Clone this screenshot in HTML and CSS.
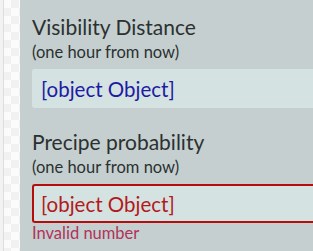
FILE: index.html
```html
<!DOCTYPE html>
<html lang="en">
<head>
  <meta charset="UTF-8">
  <title>Weather form</title>
  <link rel="stylesheet" href="styles.css">
</head>
<body>

<div class="page">
  <!-- linker Rand (Canvas-Hintergrund) -->
  <div class="side-strip"></div>

  <!-- Formular-Panel -->
  <div class="form-panel">
    <div class="field">
      <div class="field-label">Visibility Distance</div>
      <div class="field-hint">(one hour from now)</div>
      <input class="field-input" type="text" value="[object Object]">
    </div>

    <div class="field field-error">
      <div class="field-label">Precipe probability</div>
      <div class="field-hint">(one hour from now)</div>
      <input class="field-input" type="text" value="[object Object]">
      <div class="error-text">Invalid number</div>
    </div>
  </div>
</div>

</body>
</html>
```

FILE: styles.css
```css
* {
  margin: 0;
  padding: 0;
  box-sizing: border-box;
}
html, body {
  width: 100%;
  height: 100%;
  overflow: hidden;
  background: #f2f2f2;
  font-family: "Lato", sans-serif;
}

.page {
  display: flex;
  height: 100%;
}

/* schmaler Streifen links mit Karomuster */
.side-strip {
  width: 20px;
  flex-shrink: 0;
  border-left: 3px solid #f2f2f2;
  box-shadow: inset 1px 0 0 #dedede;
  background-color: #fbfbfb;
  background-image:
    linear-gradient(45deg, #f1f1f1 25%, transparent 25%, transparent 75%, #f1f1f1 75%),
    linear-gradient(45deg, #f1f1f1 25%, transparent 25%, transparent 75%, #f1f1f1 75%);
  background-size: 16px 16px;
  background-position: 0 0, 8px 8px;
}

.form-panel {
  flex: 1;
  min-width: 0;
  background: #c5cfcf;
  padding: 13px 0 0 12px;
}

.field {
  margin-bottom: 20px;
}
.field-label {
  font-size: 21px;
  line-height: 28px;
  color: #2b3131;
}
.field-hint {
  font-size: 16.5px;
  line-height: 20px;
  padding-top: 1px;
  color: #2b3131;
}
.field-input {
  display: block;
  width: 100%;
  height: 39px;
  margin-top: 7px;
  padding: 0 8px;
  background: #d5e2e2;
  border: 1px solid #d5e2e2;
  border-right: 0;
  border-radius: 3px 0 0 3px;
  font-family: "Lato", sans-serif;
  font-size: 20.5px;
  color: #1c1ca3;
  outline: none;
}

.field-error .field-input {
  border: 2px solid #b50d0d;
  border-right: 0;
  padding: 0 7px;
  color: #b31a1a;
}
.error-text {
  font-size: 16.5px;
  line-height: 18px;
  padding-top: 1px;
  color: #b0335a;
}
```
